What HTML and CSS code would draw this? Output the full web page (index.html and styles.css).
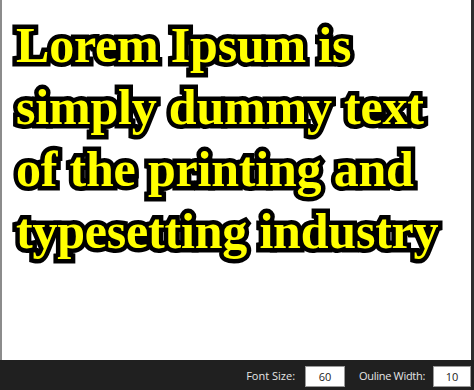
FILE: index.html
```html
<!DOCTYPE html>
<html>
<head>
<meta charset="utf-8">
<link rel="stylesheet" href="styles.css">
</head>
<body>
<div class="canvas">
  <div class="outlined">Lorem Ipsum is<br>simply dummy text<br>of the printing and<br>typesetting industry</div>
</div>
<div class="toolbar">
  <span class="label">Font Size:</span>
  <div class="field field-font">60</div>
  <span class="label label-outline">Ouline Width:</span>
  <div class="field field-outline">10</div>
</div>
</body>
</html>
```
FILE: styles.css
```css
html, body {
  margin: 0;
  padding: 0;
  width: 474px;
  height: 390px;
  overflow: hidden;
  background: #202020;
}
.canvas {
  box-sizing: border-box;
  height: 360px;
  background: #ffffff;
  border-left: 2px solid #8c8c8c;
  border-right: 3px solid #2e2e2e;
  padding: 14px 0 0 14px;
}
.outlined {
  font-family: "Liberation Serif", "Times New Roman", serif;
  font-weight: bold;
  font-size: 50px;
  line-height: 62px;
  color: #ffff00;
  white-space: nowrap;
  -webkit-text-stroke: 9px #000000;
  paint-order: stroke fill;
  letter-spacing: -0.2px;
}
.toolbar {
  height: 30px;
  display: flex;
  align-items: center;
  justify-content: flex-end;
  padding-right: 3px;
  font-family: "Open Sans", "DejaVu Sans", sans-serif;
  font-size: 11px;
  color: #e6e6e6;
}
.field {
  box-sizing: border-box;
  width: 40px;
  height: 21px;
  background: #ffffff;
  border: 1px solid #9a9a9a;
  color: #222;
  text-align: center;
  line-height: 19px;
  margin-left: 10px;
  margin-top: 2px;
}
.field-outline {
  width: 38px;
  margin-left: 8px;
}
.label-outline {
  margin-left: 14px;
  letter-spacing: -0.3px;
}
```
